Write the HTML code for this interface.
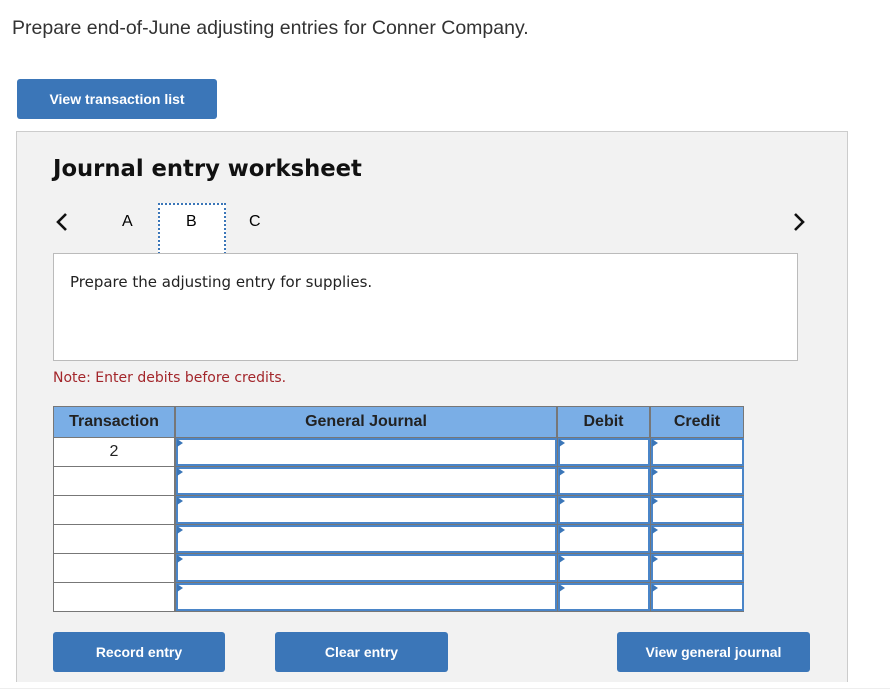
<!DOCTYPE html>
<html><head><style>
body{margin:0;width:890px;height:700px;background:#fff;font-family:"Liberation Sans",Arial,sans-serif;position:relative;overflow:hidden}
.a{position:absolute}
.btn{position:absolute;background:#3b76b8;color:#fff;font-weight:bold;font-size:14px;border-radius:3px;display:flex;align-items:center;justify-content:center}
.cell{position:absolute;background:#fff;box-sizing:border-box}
.inp{position:absolute;background:#fff;box-sizing:border-box;border:2px solid #4a85c8}
.tri{position:absolute;width:0;height:0;border-top:4px solid transparent;border-bottom:4px solid transparent;border-left:6px solid #3b76b8}
</style></head><body>
<div class="a" style="left:12px;top:17px;font-size:19.5px;color:#333">Prepare end-of-June adjusting entries for Conner Company.</div>
<div class="btn" style="left:17px;top:79px;width:200px;height:40px">View transaction list</div>
<div class="a" style="left:16px;top:131px;width:830px;height:550px;background:#f2f2f2;border:1px solid #ccc;border-bottom:none"></div>
<div class="a" style="left:0;top:688px;width:890px;height:1px;background:#eee"></div>
<div class="a" style="left:53px;top:156px;font-family:'DejaVu Sans',sans-serif;font-size:22.7px;font-weight:bold;color:#111">Journal entry worksheet</div>
<svg class="a" style="left:55px;top:212px" width="14" height="20"><path d="M11 2 L3 10 L11 18" stroke="#111" stroke-width="2.6" fill="none"/></svg>
<svg class="a" style="left:792px;top:212px" width="14" height="20"><path d="M3 2 L11 10 L3 18" stroke="#111" stroke-width="2.6" fill="none"/></svg>
<div class="a" style="left:122px;top:213px;font-size:16px">A</div>
<div class="a" style="left:158px;top:203px;width:64px;height:51px;background:#fff;border:2px dotted #3b76b8"></div>
<div class="a" style="left:186px;top:213px;font-size:16px">B</div>
<div class="a" style="left:249px;top:213px;font-size:16px">C</div>
<div class="a" style="left:53px;top:253px;width:743px;height:106px;background:#fff;border:1px solid #bbb"></div>
<div class="a" style="left:70px;top:273px;font-family:'DejaVu Sans',sans-serif;font-size:15px;color:#222">Prepare the adjusting entry for supplies.</div>
<div class="a" style="left:53px;top:370px;font-family:'DejaVu Sans',sans-serif;font-size:14px;color:#a3262b">Note: Enter debits before credits.</div>
<div class="a" style="left:53px;top:406px;width:691px;height:206px;background:#777"></div>
<div class="a" style="left:54px;top:407px;width:120px;height:30px;background:#7aaee6"></div>
<div class="a" style="left:176px;top:407px;width:380px;height:30px;background:#7aaee6"></div>
<div class="a" style="left:558px;top:407px;width:91px;height:30px;background:#7aaee6"></div>
<div class="a" style="left:651px;top:407px;width:92px;height:30px;background:#7aaee6"></div>
<div class="a" style="left:54px;top:413px;width:120px;text-align:center;font-weight:bold;font-size:16px;color:#222">Transaction</div>
<div class="a" style="left:176px;top:413px;width:380px;text-align:center;font-weight:bold;font-size:16px;color:#222">General Journal</div>
<div class="a" style="left:558px;top:413px;width:91px;text-align:center;font-weight:bold;font-size:16px;color:#222">Debit</div>
<div class="a" style="left:651px;top:413px;width:92px;text-align:center;font-weight:bold;font-size:16px;color:#222">Credit</div>
<div id="rows"></div>
<script>
var h='';for(var i=0;i<6;i++){var t=438+i*29;
h+='<div class="cell" style="left:54px;top:'+t+'px;width:120px;height:28px"></div>';
h+='<div class="inp" style="left:176px;top:'+t+'px;width:381px;height:28px"></div><div class="tri" style="left:177px;top:'+(t+1)+'px"></div>';
h+='<div class="inp" style="left:558px;top:'+t+'px;width:92px;height:28px"></div><div class="tri" style="left:559px;top:'+(t+1)+'px"></div>';
h+='<div class="inp" style="left:651px;top:'+t+'px;width:93px;height:28px"></div><div class="tri" style="left:652px;top:'+(t+1)+'px"></div>';}
document.getElementById('rows').innerHTML=h;
</script>
<div class="a" style="left:54px;top:443px;width:120px;text-align:center;font-size:16px;color:#222">2</div>
<div class="btn" style="left:53px;top:632px;width:172px;height:40px">Record entry</div>
<div class="btn" style="left:275px;top:632px;width:173px;height:40px">Clear entry</div>
<div class="btn" style="left:617px;top:632px;width:193px;height:40px">View general journal</div>
</body></html>
